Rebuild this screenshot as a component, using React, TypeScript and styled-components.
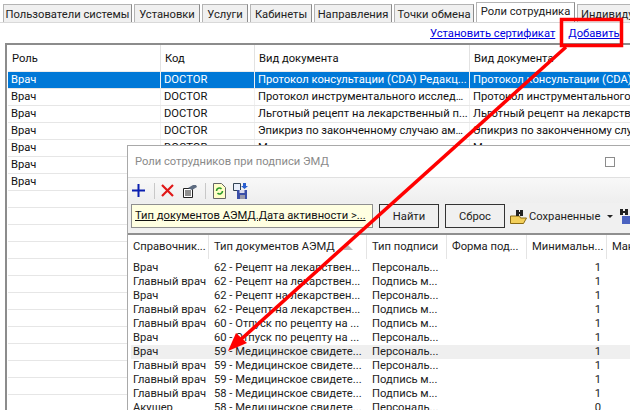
import React from 'react';
import styled, { createGlobalStyle } from 'styled-components';

const Global = createGlobalStyle`
  html, body { margin: 0; padding: 0; background: #fff; }
  body { width: 630px; height: 410px; overflow: hidden; font-family: Roboto, "Liberation Sans", Arial, sans-serif; font-size: 11.2px; color: #111; }
`;
const Page = styled.div`position: relative; width: 630px; height: 410px; overflow: hidden; background: #fff;`;
const TabStrip = styled.div`display: flex; align-items: flex-end; gap: 2px; height: 22px; padding-left: 3px; background: #fff; border-bottom: 1px solid #d9d9d9; white-space: nowrap; overflow: hidden;`;
const Tab = styled.div<{ $w: number; $on?: boolean }>`
  flex: none; box-sizing: border-box; width: ${p => p.$w}px; height: ${p => (p.$on ? 20 : 18)}px;
  padding-top: ${p => (p.$on ? 1 : 2)}px; line-height: 15px; text-align: center;
  background: ${p => (p.$on ? '#fff' : '#f0f0f0')}; border: 1px solid #b4b4b4; border-right-color: #8c8c8c; border-bottom: 0; color: #222;
`;
const LinkBar = styled.div`display: flex; gap: 13px; height: 20px; padding-left: 430px; align-items: center; white-space: nowrap; overflow: hidden;`;
const LinkText = styled.a`flex: none; color: #0000e0; text-decoration: underline;`;
const Grid = styled.div`margin-left: 5px; padding-left: 1px; height: 367px; box-sizing: border-box; border-left: 2px solid #8c8c8c; border-top: 2px solid #8c8c8c; overflow: hidden;`;
const HeadRow = styled.div`display: grid; grid-template-columns: 153px 94px 215px 200px; height: 26px; border-bottom: 1px solid #ececec;`;
const HeadCell = styled.div`box-sizing: border-box; padding: 6px 0 0 4px; border-right: 1px solid #e2e2e2; white-space: nowrap; overflow: hidden; line-height: 15px;`;
const DataRow = styled.div<{ $on?: boolean }>`display: grid; grid-template-columns: 153px 94px 215px 200px; height: 17px; line-height: 16px; box-sizing: border-box;
  border-bottom: 1px solid #e6e6e6; background: ${p => (p.$on ? '#0078d7' : '#fff')}; color: ${p => (p.$on ? '#fff' : '#111')};`;
const DataCell = styled.div`box-sizing: border-box; padding-left: 3px; border-right: 1px solid #f0f0f0; white-space: nowrap; overflow: hidden; text-overflow: ellipsis;`;

const Dialog = styled.section`position: absolute; left: 127px; top: 145px; width: 503px; height: 265px; background: #fff; border: 1px solid #a9a9a9; border-right: 0; border-bottom: 0; box-sizing: border-box; overflow: hidden;`;
const TitleBar = styled.div`display: flex; align-items: center; justify-content: space-between; height: 31px; padding: 0 15px 0 7px; color: #8a8a8a; box-sizing: border-box;`;
const Maximize = styled.span`display: block; width: 8px; height: 8px; border: 1px solid #8c8c8c;`;
const Toolbar = styled.div`display: flex; align-items: center; height: 26px; box-sizing: border-box; padding-left: 4px; background: linear-gradient(#f8f8f8, #eeeeee); border-top: 1px solid #e0e0e0;`;
const ToolIcon = styled.svg<{ $ml?: number }>`flex: none; margin-left: ${p => p.$ml ?? 0}px;`;
const Sep = styled.span<{ $ml: number }>`flex: none; width: 1px; height: 16px; background: #c8c8c8; margin-left: ${p => p.$ml}px;`;
const Filter = styled.div`display: flex; align-items: flex-start; height: 32px; padding: 1px 0 0 3px; background: #f0f0f0; border-bottom: 2px solid #8f8f8f; box-sizing: border-box; overflow: hidden;`;
const FilterText = styled.div`flex: none; box-sizing: border-box; width: 242px; height: 24px; background: #ffffe1; border: 1px solid #8f8f8f; line-height: 22px; padding-left: 3px; text-decoration: underline; white-space: nowrap; overflow: hidden; color: #111;`;
const Btn = styled.div`flex: none; box-sizing: border-box; width: 60px; height: 24px; margin-left: 6px; border: 1px solid #333; background: #f0f0f0; display: flex; align-items: center; justify-content: center; color: #222;`;
const Saved = styled.div`flex: none; display: flex; align-items: center; gap: 2px; height: 24px; margin-left: 5px; color: #222; white-space: nowrap;`;
const Caret = styled.span`display: block; margin: 0 4px 0 5px; width: 0; height: 0; border: 3px solid transparent; border-top: 3px solid #222; border-bottom: 0;`;
const SubHead = styled.div`display: grid; grid-template-columns: 81px 158px 80px 80px 80px 40px; height: 24px;`;
const SubHeadCell = styled.div`box-sizing: border-box; padding: 4px 0 0 5px; border-right: 1px solid #e4e4e4; line-height: 15px; white-space: nowrap; overflow: hidden; position: relative; color: #222;`;
const SortMark = styled.span`position: absolute; right: 13px; top: 10px; width: 0; height: 0; border: 5px solid transparent; border-top: 0; border-bottom: 5px solid #bbb;`;
const SubBody = styled.div`padding-top: 2px; margin-left: 3px;`;
const SubRow = styled.div<{ $hl?: boolean }>`display: grid; grid-template-columns: 81px 158px 150px 81px 1fr; height: 14px; line-height: 14px; background: ${p => (p.$hl ? '#efefef' : 'transparent')}; color: #222;`;
const SubCell = styled.div`padding-left: 2px; white-space: nowrap; overflow: hidden;`;
const NumCell = styled.div`grid-column: 4; text-align: right;`;
const Overlay = styled.svg`position: absolute; inset: 0; pointer-events: none;`;

const docs = [
  ['Протокол консультации (CDA) Редакц...', 'Протокол консультации (CDA) Редакция'],
  ['Протокол инструментального исследо...', 'Протокол инструментального исследования'],
  ['Льготный рецепт на лекарственный п...', 'Льготный рецепт на лекарственный препарат'],
  ['Эпикриз по законченному случаю амб...', 'Эпикриз по законченному случаю амбулат'],
  ['Медицинская справка', 'Медицинская справка'],
  ['Медицинская справка', 'Медицинская справка'],
  ['Медицинская справка', 'Медицинская справка'],
];
const emptyRows = Array.from({ length: 13 }, (_, i) => i);
const sub: [string, string, string, string][] = [
  ['Врач', '62 - Рецепт на лекарствен...', 'Персональ...', '1'],
  ['Главный врач', '62 - Рецепт на лекарствен...', 'Подпись м...', '1'],
  ['Врач', '62 - Рецепт на лекарствен...', 'Персональ...', '1'],
  ['Главный врач', '62 - Рецепт на лекарствен...', 'Подпись м...', '1'],
  ['Главный врач', '60 - Отпуск по рецепту на ...', 'Подпись м...', '1'],
  ['Врач', '60 - Отпуск по рецепту на ...', 'Персональ...', '1'],
  ['Врач', '59 - Медицинское свидете...', 'Персональ...', '1'],
  ['Главный врач', '59 - Медицинское свидете...', 'Персональ...', '1'],
  ['Главный врач', '59 - Медицинское свидете...', 'Подпись м...', '1'],
  ['Главный врач', '58 - Медицинское свидете...', 'Подпись м...', '1'],
  ['Акушер', '58 - Медицинское свидете...', 'Персональ...', '0'],
];

export default function App() {
  return (
    <Page>
      <Global />
      <TabStrip>
        <Tab $w={129}>Пользователи системы</Tab>
        <Tab $w={66}>Установки</Tab>
        <Tab $w={46}>Услуги</Tab>
        <Tab $w={62}>Кабинеты</Tab>
        <Tab $w={78}>Направления</Tab>
        <Tab $w={80}>Точки обмена</Tab>
        <Tab $w={99} $on>Роли сотрудника</Tab>
        <Tab $w={100}>Индивидуальные</Tab>
      </TabStrip>
      <LinkBar>
        <LinkText>Установить сертификат</LinkText>
        <LinkText>Добавить</LinkText>
        <LinkText>Удалить</LinkText>
      </LinkBar>
      <Grid>
        <HeadRow>
          <HeadCell>Роль</HeadCell><HeadCell>Код</HeadCell><HeadCell>Вид документа</HeadCell><HeadCell>Вид документа</HeadCell>
        </HeadRow>
        {docs.map((d, i) => (
          <DataRow key={i} $on={i === 0}>
            <DataCell>Врач</DataCell><DataCell>DOCTOR</DataCell><DataCell>{d[0]}</DataCell><DataCell>{d[1]}</DataCell>
          </DataRow>
        ))}
        {emptyRows.map(i => (
          <DataRow key={i}><DataCell /><DataCell /><DataCell /><DataCell /></DataRow>
        ))}
      </Grid>
      <Dialog>
        <TitleBar>Роли сотрудников при подписи ЭМД<Maximize /></TitleBar>
        <Toolbar>
          <ToolIcon width="13" height="13" viewBox="0 0 13 13"><path d="M6.5 0v13M0 6.5h13" stroke="#0a1fb0" strokeWidth="2" /></ToolIcon>
          <Sep $ml={9} />
          <ToolIcon $ml={6} width="13" height="13" viewBox="0 0 13 13"><path d="M1 1l11 11M12 1L1 12" stroke="#e01818" strokeWidth="2.2" /></ToolIcon>
          <ToolIcon $ml={8} width="16" height="16" viewBox="0 0 16 16"><path d="M1.5 5.5h9v9h-9z" fill="#fff" stroke="#222" /><path d="M3 8h6M3 10h6M3 12h6" stroke="#222" /><path d="M6 5l5-3h3l1 2-5 3z" fill="#5d6b80" /></ToolIcon>
          <Sep $ml={7} />
          <ToolIcon $ml={7} width="13" height="16" viewBox="0 0 13 16"><path d="M.5.5h8l4 4v11H.5z" fill="#ffffc8" stroke="#666" /><path d="M3.5 8a3 3 0 0 1 5-2.2M9.5 8a3 3 0 0 1-5 2.2" fill="none" stroke="#2a9a2a" strokeWidth="1.6" /></ToolIcon>
          <ToolIcon $ml={7} width="17" height="16" viewBox="0 0 17 16"><path d="M.5.5h7v7h-7z" fill="#e8eefa" stroke="#345" /><path d="M4 7h10v9H4z" fill="#3b4fa8" /><path d="M6.5 7h5v3h-5z" fill="#dde" /><path d="M7 12h5v4H7z" fill="#99a" /><path d="M10 0h3v3h2l-3.5 3L8 3h2z" fill="#2b5fd0" /></ToolIcon>
        </Toolbar>
        <Filter>
          <FilterText>Тип документов АЭМД.Дата активности &gt;...</FilterText>
          <Btn>Найти</Btn>
          <Btn>Сброс</Btn>
          <Saved>
            <ToolIcon width="17" height="16" viewBox="0 0 17 16"><path d="M.5 8h9l1 2h6l-3 5.5H.5z" fill="#f3cf5a" stroke="#8a6a12" /><path d="M6 2h3v6H6zM10 2h3v6h-3z" fill="#222" /><path d="M8 4h3v2H8z" fill="#222" /></ToolIcon>
            Сохраненные<Caret />
            <ToolIcon width="17" height="16" viewBox="0 0 17 16"><path d="M1 1h3v6H1zM6 1h3v6H6zM3 3h4v2H3z" fill="#222" /><path d="M3 8h12v8H3z" fill="#4a62c0" /></ToolIcon>
          </Saved>
        </Filter>
        <SubHead>
          <SubHeadCell>Справочник...</SubHeadCell>
          <SubHeadCell>Тип документов АЭМД<SortMark /></SubHeadCell>
          <SubHeadCell>Тип подписи</SubHeadCell>
          <SubHeadCell>Форма под...</SubHeadCell>
          <SubHeadCell>Минимальн...</SubHeadCell>
          <SubHeadCell>Макс</SubHeadCell>
        </SubHead>
        <SubBody>
          {sub.map((r, i) => (
            <SubRow key={i} $hl={i === 6}>
              <SubCell>{r[0]}</SubCell><SubCell>{r[1]}</SubCell><SubCell>{r[2]}</SubCell><NumCell>{r[3]}</NumCell>
            </SubRow>
          ))}
        </SubBody>
      </Dialog>
      <Overlay width="630" height="410" viewBox="0 0 630 410">
        <rect x="561.5" y="19.5" width="60" height="26" fill="none" stroke="#f00" strokeWidth="3.5" />
        <path d="M566 47L238 342" stroke="#f00" strokeWidth="3.5" />
        <path d="M228 351l8-18 11 10z" fill="#f00" />
      </Overlay>
    </Page>
  );
}
